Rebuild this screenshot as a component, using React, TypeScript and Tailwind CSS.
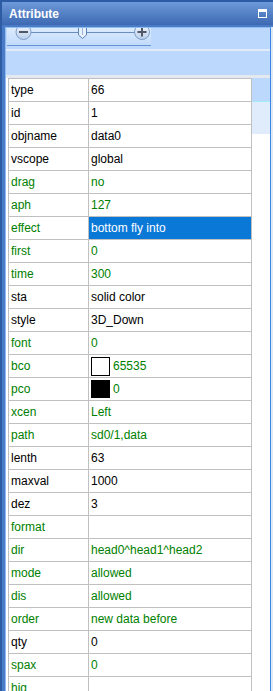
import React from "react";

type Row = { k: string; v: string; g: boolean; sel?: boolean; sw?: "w" | "b" };

const rows: Row[] = [
  { k: "type", v: "66", g: false },
  { k: "id", v: "1", g: false },
  { k: "objname", v: "data0", g: false },
  { k: "vscope", v: "global", g: false },
  { k: "drag", v: "no", g: true },
  { k: "aph", v: "127", g: true },
  { k: "effect", v: "bottom fly into", g: true, sel: true },
  { k: "first", v: "0", g: true },
  { k: "time", v: "300", g: true },
  { k: "sta", v: "solid color", g: false },
  { k: "style", v: "3D_Down", g: false },
  { k: "font", v: "0", g: true },
  { k: "bco", v: "65535", g: true, sw: "w" },
  { k: "pco", v: "0", g: true, sw: "b" },
  { k: "xcen", v: "Left", g: true },
  { k: "path", v: "sd0/1,data", g: true },
  { k: "lenth", v: "63", g: false },
  { k: "maxval", v: "1000", g: false },
  { k: "dez", v: "3", g: false },
  { k: "format", v: "", g: true },
  { k: "dir", v: "head0^head1^head2", g: true },
  { k: "mode", v: "allowed", g: true },
  { k: "dis", v: "allowed", g: true },
  { k: "order", v: "new data before", g: true },
  { k: "qty", v: "0", g: false },
  { k: "spax", v: "0", g: true },
  { k: "hig", v: "", g: true },
];

function Slider() {
  return (
    <svg width="144" height="17" viewBox="0 0 144 17" className="block">
      <defs>
        <linearGradient id="cg" x1="0" y1="0" x2="0" y2="1">
          <stop offset="0" stopColor="#f4f8fe" />
          <stop offset="1" stopColor="#b9cfec" />
        </linearGradient>
      </defs>
      <line x1="24" y1="4.5" x2="128" y2="4.5" stroke="#6a8cbf" strokeWidth="1" />
      <circle cx="16.5" cy="4" r="7.5" fill="url(#cg)" stroke="#7d9dc8" strokeWidth="1" />
      <rect x="12" y="3" width="9" height="2" fill="#505866" />
      <circle cx="135" cy="4" r="7.5" fill="url(#cg)" stroke="#7d9dc8" strokeWidth="1" />
      <rect x="130.5" y="3" width="9" height="2" fill="#505866" />
      <rect x="134" y="-0.5" width="2" height="9" fill="#505866" />
      <path d="M71.5 -1 L71.5 7 L75.5 10.5 L79.5 7 L79.5 -1 Z" fill="#e8f0fb" stroke="#5c80b8" strokeWidth="1" />
      <line x1="75.5" y1="0" x2="75.5" y2="7" stroke="#9ab4da" strokeWidth="1" />
    </svg>
  );
}

export default function App() {
  return (
    <div
      className="w-[273px] h-[691px] overflow-hidden flex flex-col bg-[#4a7bc7] border-l-2 border-[#2d5ba4]"
      style={{ fontFamily: '"Liberation Sans", Arial, sans-serif' }}
    >
      {/* title bar */}
      <div className="h-[2px] bg-[#2d5ba4] shrink-0" />
      <div className="h-[23px] shrink-0 flex items-center justify-between pl-[7px] pr-[6px] bg-gradient-to-b from-[#6e99d9] to-[#3c69b2]">
        <span className="text-white font-bold text-[12px] leading-none">Attribute</span>
        <div className="w-[9px] h-[9px] border border-white border-t-[3px] mb-[1px]" />
      </div>
      <div className="h-[2px] shrink-0" />
      {/* body */}
      <div className="flex flex-1 min-h-0">
        <div className="w-[3px] shrink-0" />
        <div className="w-[266px] shrink-0 flex flex-col border-l border-t border-l-[#8fbcf2] border-t-[#8fbcf2] border-r border-r-[#3a86e4] bg-[#bcd8fc]">
          <div className="ml-[1px] w-[144px] h-[18px] shrink-0 bg-gradient-to-b from-[#dcebfd] to-[#c2dbfb] border-b border-[#6893d2] overflow-hidden">
            <Slider />
          </div>
          <div className="h-[3px] shrink-0" />
          <div className="h-[2px] shrink-0 bg-[#e2ecf8]" />
          <div className="h-[24px] shrink-0" />
          <div className="h-[3px] shrink-0 bg-[#e4e9f0]" />
          <div className="flex flex-1 bg-white">
            <div className="w-[2px] shrink-0" />
            <div className="w-[244px] shrink-0 border-l border-t border-r border-[#c0c0c0] text-[12px] self-start">
              {rows.map((r) => (
                <div key={r.k} className="flex h-[23px] border-b border-[#c0c0c0]">
                  <div
                    className={`w-[80px] shrink-0 border-r border-[#c0c0c0] pl-[2px] pt-[1px] leading-[21px] ${
                      r.g ? "text-[#008000]" : "text-black"
                    }`}
                  >
                    {r.k}
                  </div>
                  <div
                    className={`flex-1 flex items-center pl-[2px] ${
                      r.sel ? "bg-[#0a78d7] text-white" : r.g ? "text-[#008000]" : "text-black"
                    }`}
                  >
                    {r.sw === "w" && (
                      <div className="w-[19px] h-[19px] border border-black bg-white mr-[3px] shrink-0" />
                    )}
                    {r.sw === "b" && <div className="w-[19px] h-[18px] bg-black mr-[3px] shrink-0" />}
                    <span className="pt-[1px] leading-[21px]">{r.v}</span>
                  </div>
                </div>
              ))}
            </div>
            <div className="flex-1 flex flex-col">
              <div className="h-[23px] bg-[#bcd8fc]" />
              <div className="h-[1px] bg-[#a4ecf6]" />
              <div className="h-[32px] bg-[#e0ebfc]" />
            </div>
          </div>
        </div>
        <div className="w-[2px] shrink-0 bg-[#dfe8f5]" />
      </div>
    </div>
  );
}
